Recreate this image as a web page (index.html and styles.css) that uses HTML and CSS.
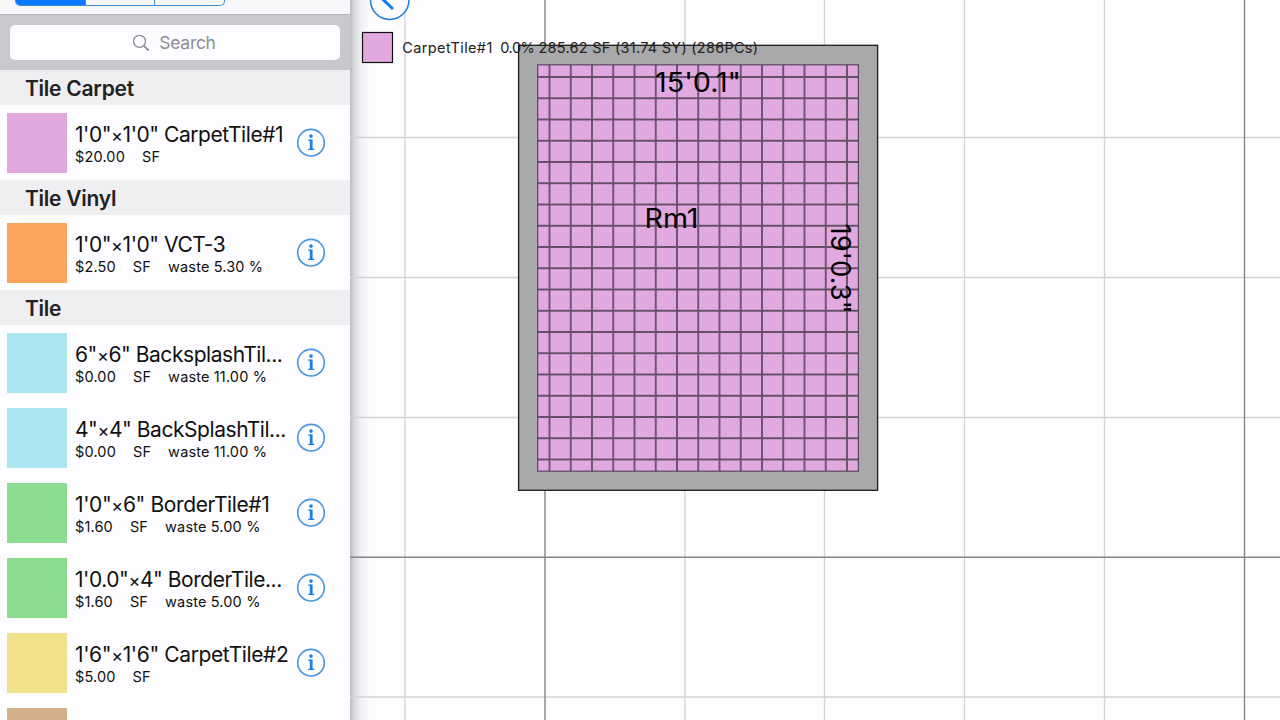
FILE: index.html
```html
<!doctype html>
<html>
<head>
    <meta charset="utf-8"/>
    <title>Floor plan</title>
    <link rel="stylesheet" href="styles.css">
</head>
<body>
    <svg class="defs" width="0" height="0">
        <symbol id="info" viewBox="0 0 30 30">
            <circle cx="15" cy="14.7" r="13.3" fill="none" stroke="#4a97e0" stroke-width="1.6"/>
            <circle cx="15" cy="8.1" r="1.8" fill="#1a7fe6"/>
            <path d="M12.3 12.1H15.2M12.2 21.4H18.2" fill="none" stroke="#1a7fe6" stroke-width="1.2"/>
            <path d="M15.2 11.6V21.7" stroke="#1a7fe6" stroke-width="2.8"/>
        </symbol>
    </svg>

    <div class="app">
        <div class="sidebar">
            <div class="toolbar">
                <div class="segments">
                    <span class="on"></span><span></span><span></span>
                </div>
            </div>
            <div class="searchbar">
                <div class="search">
                    <svg width="18" height="18" viewBox="0 0 18 18" fill="none" stroke="#8e8e93">
                        <circle cx="7.5" cy="7.3" r="6" stroke-width="1.3"/>
                        <path d="M11.8 11.7L16.6 16.5" stroke-width="1.8"/>
                    </svg>
                    <span class="placeholder">Search</span>
                </div>
            </div>

            <h3>Tile Carpet</h3>
            <div class="row">
                <div class="swatch pink"></div>
                <div class="text">
                    <div class="name">1'0"<i>×</i>1'0" CarpetTile#1</div>
                    <div class="meta"><span>$20.00</span><span>SF</span></div>
                </div>
                <svg class="info"><use href="#info"/></svg>
            </div>

            <h3>Tile Vinyl</h3>
            <div class="row">
                <div class="swatch orange"></div>
                <div class="text">
                    <div class="name">1'0"<i>×</i>1'0" VCT-3</div>
                    <div class="meta"><span>$2.50</span><span>SF</span><span>waste 5.30 %</span></div>
                </div>
                <svg class="info"><use href="#info"/></svg>
            </div>

            <h3>Tile</h3>
            <div class="row">
                <div class="swatch blue"></div>
                <div class="text">
                    <div class="name">6"<i>×</i>6" BacksplashTil...</div>
                    <div class="meta"><span>$0.00</span><span>SF</span><span>waste 11.00 %</span></div>
                </div>
                <svg class="info"><use href="#info"/></svg>
            </div>
            <div class="row">
                <div class="swatch blue"></div>
                <div class="text">
                    <div class="name">4"<i>×</i>4" BackSplashTil...</div>
                    <div class="meta"><span>$0.00</span><span>SF</span><span>waste 11.00 %</span></div>
                </div>
                <svg class="info"><use href="#info"/></svg>
            </div>
            <div class="row">
                <div class="swatch green"></div>
                <div class="text">
                    <div class="name wide">1'0"<i>×</i>6" BorderTile#1</div>
                    <div class="meta"><span>$1.60</span><span>SF</span><span>waste 5.00 %</span></div>
                </div>
                <svg class="info"><use href="#info"/></svg>
            </div>
            <div class="row">
                <div class="swatch green"></div>
                <div class="text">
                    <div class="name">1'0.0"<i>×</i>4" BorderTile...</div>
                    <div class="meta"><span>$1.60</span><span>SF</span><span>waste 5.00 %</span></div>
                </div>
                <svg class="info"><use href="#info"/></svg>
            </div>
            <div class="row">
                <div class="swatch yellow"></div>
                <div class="text">
                    <div class="name wide">1'6"<i>×</i>1'6" CarpetTile#2</div>
                    <div class="meta"><span>$5.00</span><span>SF</span></div>
                </div>
                <svg class="info"><use href="#info"/></svg>
            </div>
            <div class="row">
                <div class="swatch tan"></div>
            </div>
        </div>

        <svg class="plan" width="930" height="720" viewBox="350 0 930 720">
            <defs>
                <pattern id="tiles" x="549.5" y="77" width="21.25" height="21.25" patternUnits="userSpaceOnUse">
                    <path d="M0 0H21.25M0 21.25H21.25M0 0V21.25M21.25 0V21.25" stroke="#644f67" stroke-width="1.8" fill="none"/>
                </pattern>
            </defs>

            <!-- grid -->
            <path class="minor" d="M405 0V720M685 0V720M824.5 0V720M964.5 0V720M1104.5 0V720"/>
            <path class="minor" d="M350 137.5H1280M350 277.5H1280M350 417.5H1280M350 697H1280"/>
            <path class="major" d="M545 0V720M1244.5 0V720M350 557.3H1280"/>

            <!-- room -->
            <rect x="518.6" y="45.3" width="359" height="445" fill="#a9a8aa" stroke="#1c1c1c" stroke-width="1.3"/>
            <rect x="537.7" y="64.8" width="320.7" height="406.4" fill="#e2a8e0"/>
            <rect x="537.7" y="64.8" width="320.7" height="406.4" fill="url(#tiles)" stroke="#5a465e" stroke-width="1.2"/>
            <text class="dim" x="655" y="91.9" textLength="86" lengthAdjust="spacingAndGlyphs">15'0.1"</text>
            <text class="dim" x="644.5" y="227.6" textLength="54" lengthAdjust="spacingAndGlyphs">Rm1</text>
            <text class="dim" transform="translate(831 223.5) rotate(90)" textLength="90" lengthAdjust="spacingAndGlyphs">19'0.3"</text>

            <!-- legend -->
            <rect x="362.5" y="32.5" width="30" height="30" fill="#e2a8e0" stroke="#111" stroke-width="1.2"/>
            <text class="legend" x="402.3" y="52.6" textLength="90">CarpetTile#1</text>
            <text class="legend" x="500.3" y="52.6" textLength="34.5">0.0%</text>
            <text class="legend" x="538.5" y="52.6" textLength="219.5">285.62 SF (31.74 SY) (286PCs)</text>

            <!-- back button -->
            <circle cx="389.7" cy="0.2" r="19.2" fill="#fdfcfe" stroke="#1c7ce0" stroke-width="1.5"/>
            <path d="M393 -9L383.5 0L393 9" fill="none" stroke="#0f7af0" stroke-width="3"/>
        </svg>
    </div>
</body>
</html>
```

FILE: styles.css
```css
* {
    box-sizing:border-box;
}
body {
    margin:0;
    width:1280px;
    height:720px;
    overflow:hidden;
    background:#fdfcfe;
    font-family:Inter, "Liberation Sans", sans-serif;
    font-feature-settings:"calt" 0;
    color:#111;
}
.defs { display:block; height:0; }

.app {
    display:flex;
    height:720px;
    overflow:hidden;
}
.sidebar {
    flex:none;
    width:350px;
    height:720px;
    overflow:hidden;
    background:#fdfcfe;
}

.toolbar {
    height:15px;
    padding-left:15px;
    background:#f8f7f9;
    border-bottom:1px solid #b2b1b5;
}
.segments {
    display:flex;
    width:210px;
    height:6px;
    border:1.5px solid #3f8ed8;
    border-top:0;
    border-radius:0 0 5px 5px;
    overflow:hidden;
}
.segments span {
    flex:1;
    border-left:1px solid #3f8ed8;
}
.segments .on {
    background:#0a7aff;
    border-left:0;
}

.searchbar {
    height:55px;
    padding:10px;
    background:#c9c8ce;
}
.search {
    display:flex;
    align-items:center;
    justify-content:center;
    gap:9px;
    height:35px;
    padding-right:2px;
    border-radius:5px;
    background:#fdfcfe;
    color:#8e8e93;
    font-size:17.5px;
    letter-spacing:-.3px;
}
.placeholder { margin-top:-1px; }

h3 {
    height:35px;
    margin:0;
    padding:1px 0 0 25px;
    background:#efeef1;
    font-size:21px;
    font-weight:600;
    line-height:36px;
    letter-spacing:-.25px;
    color:#222;
}

.row {
    display:flex;
    align-items:center;
    height:75px;
    padding:0 24px 0 7px;
}
.swatch {
    flex:none;
    width:60px;
    height:60px;
    margin-right:8px;
}
.pink { background:#e2a8e0; }
.orange { background:#fba55f; }
.blue { background:#abe6ef; }
.green { background:#8cdd90; }
.yellow { background:#f0e08a; }
.tan { background:#d3b08a; }

.text {
    flex:1;
    min-width:0;
    padding-top:2px;
    white-space:nowrap;
}
.name {
    font-size:21px;
    line-height:26px;
    letter-spacing:-.45px;
}
.name.wide { letter-spacing:-.38px; }
.name i {
    font-size:18px;
    font-style:normal;
    line-height:1;
}
.meta {
    display:flex;
    gap:17px;
    font-size:14.5px;
    line-height:18px;
    letter-spacing:.15px;
}
.info {
    flex:none;
    width:30px;
    height:30px;
}

.plan {
    flex:none;
    background:linear-gradient(90deg, #bdbcc0, #dcdbde 5px, #efeef0 10px, #fdfcfe 20px);
}
.minor { stroke:#d4d3d6; stroke-width:1.3; }
.major { stroke:#858487; stroke-width:1.4; }
.dim { font-size:26.5px; }
.legend { font-size:14.5px; fill:#222; }
```
